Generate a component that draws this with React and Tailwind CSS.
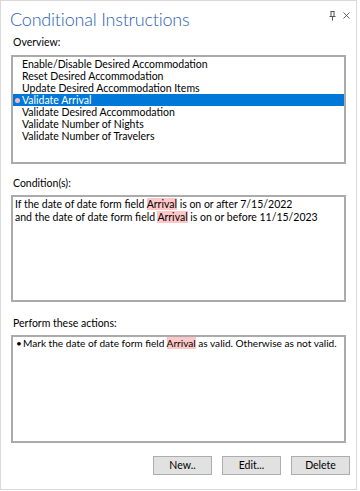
import { X } from 'lucide-react';

const rules = [
  'Enable/Disable Desired Accommodation',
  'Reset Desired Accommodation',
  'Update Desired Accommodation Items',
  'Validate Arrival',
  'Validate Desired Accommodation',
  'Validate Number of Nights',
  'Validate Number of Travelers',
];

const Field = ({ children }) => (
  <span className="bg-[#ffc8c8]">{children}</span>
);

const PinIcon = () => (
  <svg width="7" height="10" viewBox="0 0 7 10" className="text-[#555]">
    <path d="M1.5 0.5h4M2 0.5v5M5 0.5v5M0.5 5.5h6M3.5 5.5v4" stroke="currentColor" strokeWidth="1" fill="none" />
  </svg>
);

const FieldLabel = ({ children }) => (
  <div className="px-[12px] text-[10.5px] leading-[14px] text-black">{children}</div>
);

export default function App() {
  return (
    <div className="w-[360px] h-[491px] bg-white">
      <div
        className="w-[357px] h-[490px] border border-[#d9d9d9] flex flex-col"
        style={{ fontFamily: 'Lato, "Open Sans", sans-serif' }}
      >
        {/* Header */}
        <div className="flex items-start justify-between pl-[9px] pr-[4px] pt-[5px] h-[34px]">
          <div className="text-[18px] tracking-[-0.2px] font-light text-[#2b5fb6] leading-[26px]">Conditional Instructions</div>
          <div className="flex items-center gap-[5px] pt-[4px]">
            <PinIcon />
            <X className="w-[11px] h-[11px] text-[#444]" strokeWidth={1.8} />
          </div>
        </div>

        <FieldLabel>Overview:</FieldLabel>
        <div className="mx-[10px] mt-[6px] h-[109px] border-2 border-[#ababab] bg-white pt-[1px] text-[10.5px] leading-[12px] text-black">
          {rules.map((r, i) => (
            <div
              key={r}
              className={
                i === 3
                  ? 'flex items-center h-[12px] bg-[#0078d7] text-white'
                  : 'flex items-center h-[12px]'
              }
            >
              <span className="w-[9px] flex justify-center">
                {i === 3 && <span className="w-[5px] h-[5px] rounded-full bg-[#f7b8c8]" />}
              </span>
              <span>{r}</span>
            </div>
          ))}
        </div>

        <div className="mt-[12px]"><FieldLabel>Condition(s):</FieldLabel></div>
        <div className="mx-[10px] mt-[5px] h-[107px] border-2 border-[#ababab] bg-white px-[2px] pt-[1px] text-[10.5px] leading-[13px] text-black">
          <div>If the date of date form field <Field>Arrival</Field> is on or after 7/15/2022</div>
          <div>and the date of date form field <Field>Arrival</Field> is on or before 11/15/2023</div>
        </div>

        <div className="mt-[14px]"><FieldLabel>Perform these actions:</FieldLabel></div>
        <div className="mx-[10px] mt-[5px] h-[108px] border-2 border-[#ababab] bg-white pl-[3px] pr-[2px] text-[10.1px] leading-[13px] text-black">
          <div className="flex whitespace-nowrap">
            <span className="w-[7px]">•</span>
            <span>Mark the date of date form field <Field>Arrival</Field> as valid. Otherwise as not valid.</span>
          </div>
        </div>

        <div className="flex justify-end gap-[10px] pr-[6px] mt-[13px]">
          {['New..', 'Edit...', 'Delete'].map((b) => (
            <button
              key={b}
              className="w-[59px] h-[19px] border border-[#adadad] bg-[#e1e1e1] text-[10.5px] leading-[17px] text-black"
            >
              {b}
            </button>
          ))}
        </div>
      </div>
    </div>
  );
}
